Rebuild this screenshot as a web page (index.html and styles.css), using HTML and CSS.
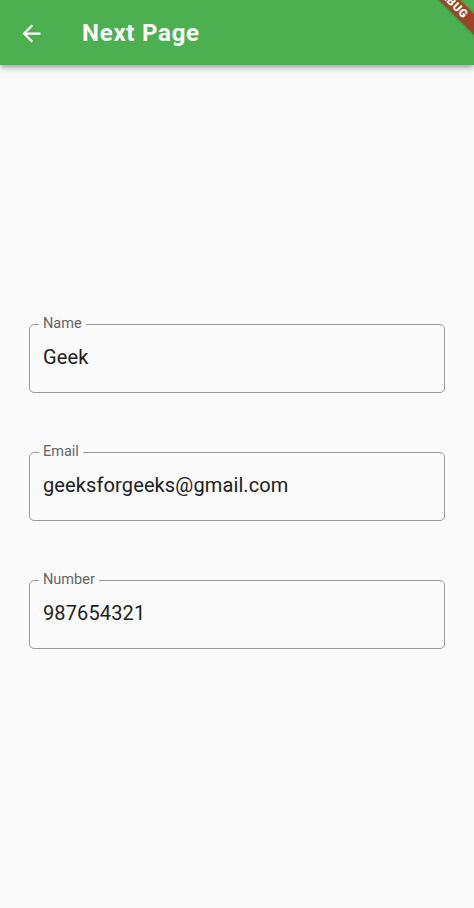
FILE: index.html
```html
<!DOCTYPE html>
<html lang="en">
<head>
<meta charset="utf-8">
<title>Next Page</title>
<link rel="stylesheet" href="styles.css">
</head>
<body>
<div class="screen">
  <header class="appbar">
    <button class="back" aria-label="Back">
      <svg viewBox="0 0 24 24" width="27" height="27"><path fill="#fff" d="M20 11H7.83l5.59-5.59L12 4l-8 8 8 8 1.41-1.41L7.83 13H20v-2z"/></svg>
    </button>
    <h1 class="title">Next Page</h1>
  </header>
  <div class="banner-corner"><div class="banner">DEBUG</div></div>
  <main class="form">
    <div class="field">
      <label class="label">Name</label>
      <input class="input" type="text" value="Geek">
    </div>
    <div class="field">
      <label class="label">Email</label>
      <input class="input" type="text" value="geeksforgeeks@gmail.com">
    </div>
    <div class="field">
      <label class="label">Number</label>
      <input class="input" type="text" value="987654321">
    </div>
  </main>
</div>
</body>
</html>
```

FILE: styles.css
```css
* { box-sizing: border-box; }
html, body {
  margin: 0;
  padding: 0;
  background: #fafafa;
}
body {
  font-family: Roboto, "Liberation Sans", sans-serif;
  width: 474px;
  height: 908px;
  overflow: hidden;
}
.screen {
  position: relative;
  width: 474px;
  height: 908px;
  background: #fafafa;
}
.appbar {
  height: 65px;
  background: #4caf50;
  display: flex;
  align-items: center;
  padding-left: 18px;
  box-shadow: 0 2px 4px -1px rgba(0,0,0,0.2), 0 4px 5px 0 rgba(0,0,0,0.14), 0 1px 10px 0 rgba(0,0,0,0.12);
  position: relative;
  z-index: 1;
}
.back {
  width: 27px;
  height: 27px;
  padding: 0;
  border: 0;
  background: none;
  display: flex;
  margin-top: 1px;
}
.title {
  margin: 0 0 0 37px;
  color: #fff;
  font-size: 24px;
  font-weight: 700;
  letter-spacing: 0.75px;
}
.banner-corner {
  position: absolute;
  top: 0;
  right: 0;
  width: 100px;
  height: 60px;
  overflow: hidden;
  z-index: 2;
  pointer-events: none;
}
.banner {
  position: absolute;
  width: 120px;
  height: 15px;
  left: 13px;
  top: -10px;
  padding-left: 14px;
  transform: rotate(45deg);
  background: rgba(183, 28, 28, 0.72);
  box-shadow: 0 0 3px rgba(0,0,0,0.25);
  color: #fff;
  font-size: 11.5px;
  font-weight: 900;
  line-height: 15px;
  text-align: center;
  letter-spacing: 0.5px;
}
.form {
  padding: 259px 29px 0;
  display: flex;
  flex-direction: column;
  gap: 59px;
}
.field {
  position: relative;
  height: 69px;
  border: 1px solid #9a9a9a;
  border-radius: 5px;
  padding: 20px 13px 0;
}
.label {
  position: absolute;
  top: -9px;
  left: 9px;
  padding: 0 4px;
  background: #fafafa;
  color: #646464;
  font-size: 14.5px;
  line-height: 16px;
}
.input {
  display: block;
  width: 100%;
  border: 0;
  padding: 0;
  margin: 0;
  outline: none;
  background: transparent;
  color: #212121;
  font-family: Roboto, "Liberation Sans", sans-serif;
  font-size: 20px;
  letter-spacing: 0.12px;
  line-height: 24px;
  height: 24px;
}
```
